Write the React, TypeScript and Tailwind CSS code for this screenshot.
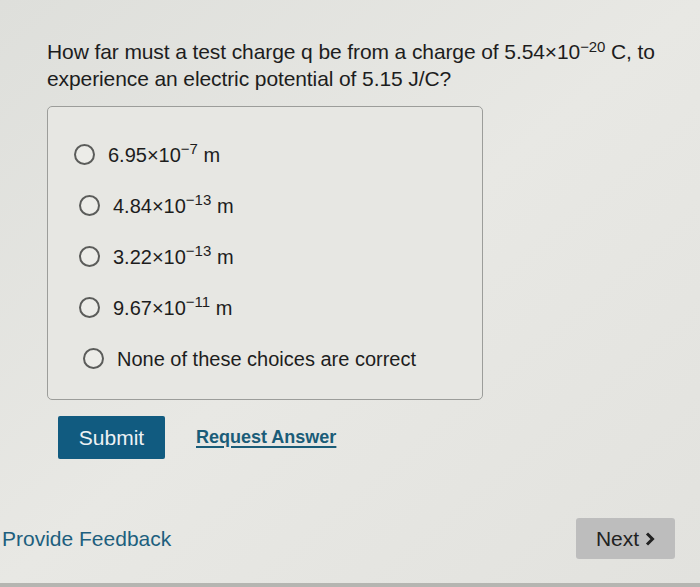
const options: { base: string; exp?: string; unit?: string }[] = [
  { base: '6.95×10', exp: '−7', unit: 'm' },
  { base: '4.84×10', exp: '−13', unit: 'm' },
  { base: '3.22×10', exp: '−13', unit: 'm' },
  { base: '9.67×10', exp: '−11', unit: 'm' },
  { base: 'None of these choices are correct' },
]

function Radio() {
  return <span className="block h-[21px] w-[21px] shrink-0 rounded-full border-2 border-[#5b5c5a] bg-[#ecece8]" />
}

export default function App() {
  return (
    <main
      className="relative flex h-[587px] w-[700px] flex-col overflow-hidden bg-gradient-to-br from-[#dedfdb] via-[#e8e8e4] to-[#e2e2de] text-[#1b1b1b]"
      style={{ fontFamily: '"Liberation Sans", Arial, sans-serif' }}
    >
      <section className="pl-[47px] pr-4 pt-[38px]">
        <h1 className="text-[21px] leading-[27px] tracking-[-0.1px] text-[#1d1d1d]">
          How far must a test charge q be from a charge of 5.54×10
          <sup className="text-[15px]">−20</sup> C, to
          <br />
          experience an electric potential of 5.15 J/C?
        </h1>

        <div className="mt-[14px] w-[436px] rounded-[5px] border-[1.5px] border-[#9c9d9a] bg-[#e7e7e3] pb-[30px] pl-[26px] pt-[37px]">
          <ul className="flex flex-col gap-[30px]">
            {options.map((o, i) => (
              <li key={i} className="flex h-[21px] items-center gap-[13px]" style={{ paddingLeft: i === 4 ? 9 : i > 0 ? 5 : 0 }}>
                <Radio />
                <span className="text-[20px] leading-none text-[#1d1d1d]">
                  {o.base}
                  {o.exp && <sup className="text-[15px]">{o.exp}</sup>}
                  {o.unit && <> {o.unit}</>}
                </span>
              </li>
            ))}
          </ul>
        </div>

        <div className="mt-[16px] flex items-center gap-[31px] pl-[11px]">
          <button className="h-[43px] w-[107px] rounded-[2px] bg-[#115b80] text-[21px] text-[#eef2f4]">
            Submit
          </button>
          <a className="text-[18px] font-bold text-[#1a5c78] underline decoration-[1.5px] underline-offset-[3px]">
            Request Answer
          </a>
        </div>
      </section>

      <footer className="mt-[59px] flex items-center justify-between pl-[2px] pr-[25px]">
        <a className="text-[21px] text-[#1d5f7e]">Provide Feedback</a>
        <button className="flex h-[41px] w-[99px] items-center justify-center gap-[6px] rounded-[3px] bg-[#bdbdbd] text-[21px] text-[#222]">
          Next
          <svg width="10" height="14" viewBox="0 0 10 14" fill="none">
            <path d="M2 1.5 7.5 7 2 12.5" stroke="#222" strokeWidth="3" />
          </svg>
        </button>
      </footer>

      <div className="absolute bottom-0 left-0 h-[4px] w-full bg-[#b5b5b1]" />
    </main>
  )
}
